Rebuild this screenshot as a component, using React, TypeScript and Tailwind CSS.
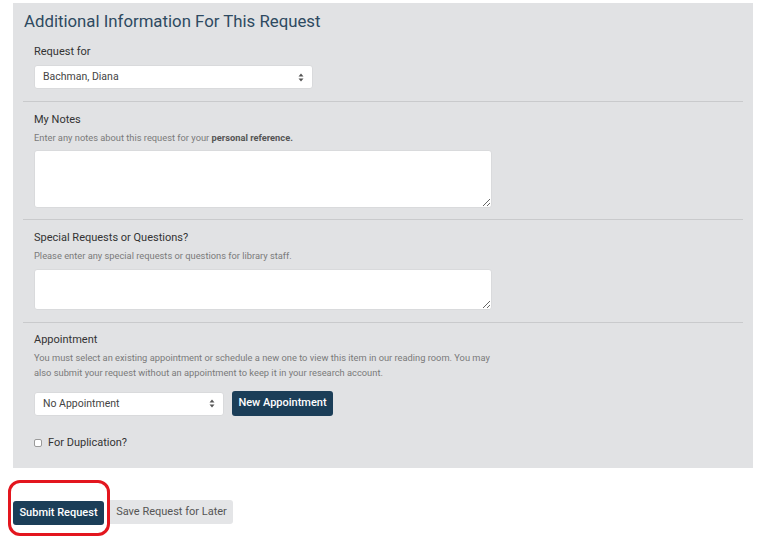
import React from "react";

const SelectArrows = () => (
  <svg width="6" height="9" viewBox="0 0 6 9" className="shrink-0">
    <path d="M3 0.5 L5.5 3.5 H0.5 Z" fill="#555" />
    <path d="M3 8.5 L5.5 5.5 H0.5 Z" fill="#555" />
  </svg>
);

const FakeSelect = ({ value, width }: { value: string; width: string }) => (
  <div
    className={`${width} h-[24px] bg-white border border-[#d9dadc] rounded-[3px] flex items-center justify-between pl-[8px] pr-[8px] text-[10.5px] text-[#444]`}
  >
    <span>{value}</span>
    <SelectArrows />
  </div>
);

const Label = ({ children }: { children: React.ReactNode }) => (
  <div className="text-[11px] leading-[16px] text-[#333]">{children}</div>
);

const Help = ({ children }: { children: React.ReactNode }) => (
  <div className="text-[9.3px] leading-[15px] text-[#7a7a7a] mt-[2px]">{children}</div>
);

export default function App() {
  return (
    <div
      className="min-h-screen bg-white pt-[3px]"
      style={{ fontFamily: "Roboto, 'Liberation Sans', sans-serif" }}
    >
      <div className="ml-[13px] w-[740px] bg-[#e1e2e4] px-[10px] pt-[6px] pb-[17px]">
        <h2 className="pl-[1px] text-[16.8px] leading-[24px] text-[#2e4a61] font-normal">
          Additional Information For This Request
        </h2>

        <section className="px-[11px] pt-[11px] pb-[12px] border-b border-[#c9cacc]">
          <Label>Request for</Label>
          <div className="mt-[5px]">
            <FakeSelect value="Bachman, Diana" width="w-[279px]" />
          </div>
        </section>

        <section className="px-[11px] pt-[10px] pb-[11px] border-b border-[#c9cacc]">
          <Label>My Notes</Label>
          <Help>
            Enter any notes about this request for your{" "}
            <span className="font-bold text-[#555]">personal reference.</span>
          </Help>
          <textarea className="block mt-[5px] w-[458px] h-[58px] bg-white border border-[#d9dadc] rounded-[3px] outline-none" />
        </section>

        <section className="px-[11px] pt-[10px] pb-[12px] border-b border-[#c9cacc]">
          <Label>Special Requests or Questions?</Label>
          <Help>Please enter any special requests or questions for library staff.</Help>
          <textarea className="block mt-[6px] w-[458px] h-[41px] bg-white border border-[#d9dadc] rounded-[3px] outline-none" />
        </section>

        <section className="px-[11px] pt-[9px]">
          <Label>Appointment</Label>
          <Help>
            You must select an existing appointment or schedule a new one to view this item in our reading room. You may
            <br />
            also submit your request without an appointment to keep it in your research account.
          </Help>
          <div className="mt-[11px] flex items-center gap-[8px]">
            <FakeSelect value="No Appointment" width="w-[190px]" />
            <button className="h-[25px] w-[101px] rounded-[3px] bg-[#1b3e58] text-white text-[11px] font-medium">
              New Appointment
            </button>
          </div>
          <label className="mt-[19px] flex items-center gap-[6px] text-[11px] leading-[16px] text-[#333]">
            <span className="w-[8px] h-[8px] bg-white border border-[#9a9a9a] rounded-[2px]" />
            For Duplication?
          </label>
        </section>
      </div>

      <div className="ml-[13px] mt-[31px] flex items-center">
        <div className="relative">
          <button className="h-[24px] w-[91px] rounded-[3px] bg-[#1b3e58] text-white text-[11px] font-medium">
            Submit Request
          </button>
          <div className="absolute -left-[5px] -right-[6px] -top-[19px] -bottom-[11px] border-[3px] border-[#e3161e] rounded-[12px] pointer-events-none" />
        </div>
        <button className="ml-[6px] h-[24px] w-[123px] rounded-r-[3px] bg-[#e4e5e7] text-[#555] text-[11px]">
          Save Request for Later
        </button>
      </div>
    </div>
  );
}
